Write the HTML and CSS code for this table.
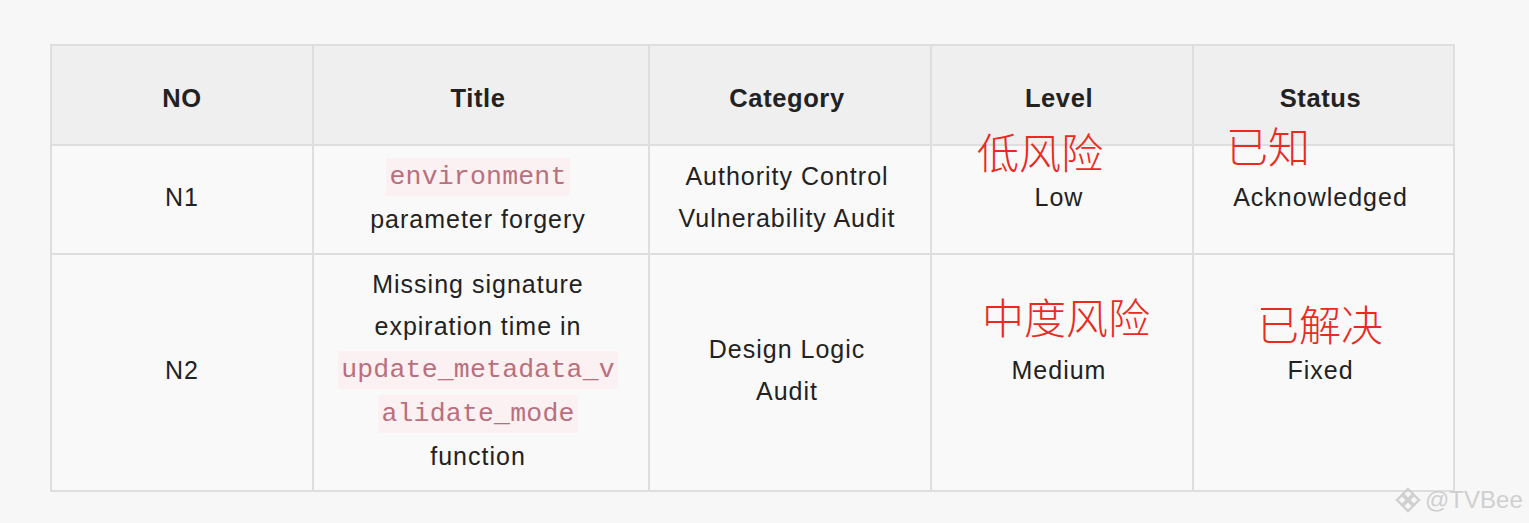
FILE: index.html
```html
<!DOCTYPE html>
<html>
<head>
<meta charset="utf-8">
<link rel="stylesheet" href="styles.css">
</head>
<body>
<div class="page">
  <table class="findings">
    <colgroup>
      <col class="c-no"><col class="c-title"><col class="c-cat"><col class="c-level"><col class="c-status">
    </colgroup>
    <thead>
      <tr class="head">
        <th class="first">NO</th><th>Title</th><th>Category</th><th>Level</th><th>Status</th>
      </tr>
    </thead>
    <tbody>
      <tr class="r1">
        <td class="first">N1</td>
        <td><code>environment</code><br>parameter forgery</td>
        <td>Authority Control<br>Vulnerability Audit</td>
        <td class="anno-cell"><span class="note note-l1">低风险</span>Low</td>
        <td class="anno-cell"><span class="note note-s1">已知</span>Acknowledged</td>
      </tr>
      <tr class="r2">
        <td class="first">N2</td>
        <td>Missing signature<br>expiration time in<br><code>update_metadata_v</code><br><code>alidate_mode</code><br>function</td>
        <td>Design Logic<br>Audit</td>
        <td class="anno-cell"><span class="note note-l2">中度风险</span>Medium</td>
        <td class="anno-cell"><span class="note note-s2">已解决</span>Fixed</td>
      </tr>
    </tbody>
  </table>
  <div class="mark">
    <svg class="mark-logo" viewBox="0 0 26 26" width="26" height="26">
      <g fill="none" stroke="#d0d0d0" stroke-width="2.4">
        <path d="M13 2 L18 7 L13 12 L8 7 Z"/>
        <path d="M7 8 L12 13 L7 18 L2 13 Z"/>
        <path d="M19 8 L24 13 L19 18 L14 13 Z"/>
        <path d="M13 14 L18 19 L13 24 L8 19 Z"/>
      </g>
    </svg>
    <span>@TVBee</span>
  </div>
</div>
</body>
</html>
```

FILE: styles.css
```css
html, body {
  margin: 0;
  padding: 0;
  background: #f7f7f7;
}
.page {
  position: relative;
  width: 1529px;
  height: 523px;
  padding: 44px 0 0 50px;
  box-sizing: border-box;
  font-family: "Liberation Sans", Arial, "Noto Sans CJK SC", sans-serif;
  color: #222;
}
.findings {
  border-collapse: collapse;
  table-layout: fixed;
  width: 1403px;
  background: #f9f9f9;
}
.c-no { width: 262px; }
.c-title { width: 336px; }
.c-cat { width: 282px; }
.c-level { width: 262px; }
.c-status { width: 261px; }
.findings th, .findings td {
  border: 2px solid #dedede;
  text-align: center;
  vertical-align: middle;
  font-size: 25px;
  letter-spacing: 1px;
  line-height: 42px;
  padding: 0 11px 6px 5px;
}
.findings th {
  background: #efefef;
  font-weight: bold;
  font-size: 25.5px;
  color: #222;
  height: 92px;
  letter-spacing: 0.6px;
  padding: 6px 11px 0 5px;
}
.findings .first {
  padding-left: 8px;
  padding-right: 8px;
}
.r1 td { height: 101px; }
.r2 td { height: 229px; }
code {
  font-family: "Liberation Mono", "Courier New", monospace;
  font-size: 26.5px;
  letter-spacing: 0.2px;
  color: #b8707f;
  background: #fbf0f2;
  padding: 4px 3px;
}
.anno-cell {
  position: relative;
}
.note {
  position: absolute;
  font-family: "Noto Sans CJK SC", sans-serif;
  font-weight: 300;
  color: #ea2a1f;
  font-size: 42px;
  line-height: 44px;
  letter-spacing: 0;
  white-space: nowrap;
}
.note-l1 { left: 45px; top: -17px; }
.note-s1 { left: 32px; top: -23px; }
.note-l2 { left: 50px; top: 39px; }
.note-s2 { left: 63px; top: 46px; }
.mark {
  position: absolute;
  left: 1395px;
  top: 486px;
  display: flex;
  align-items: center;
  gap: 4px;
  color: #cfcfcf;
  font-family: "Liberation Sans", Arial, sans-serif;
  font-size: 24px;
}
.mark-logo { display: block; }
```
